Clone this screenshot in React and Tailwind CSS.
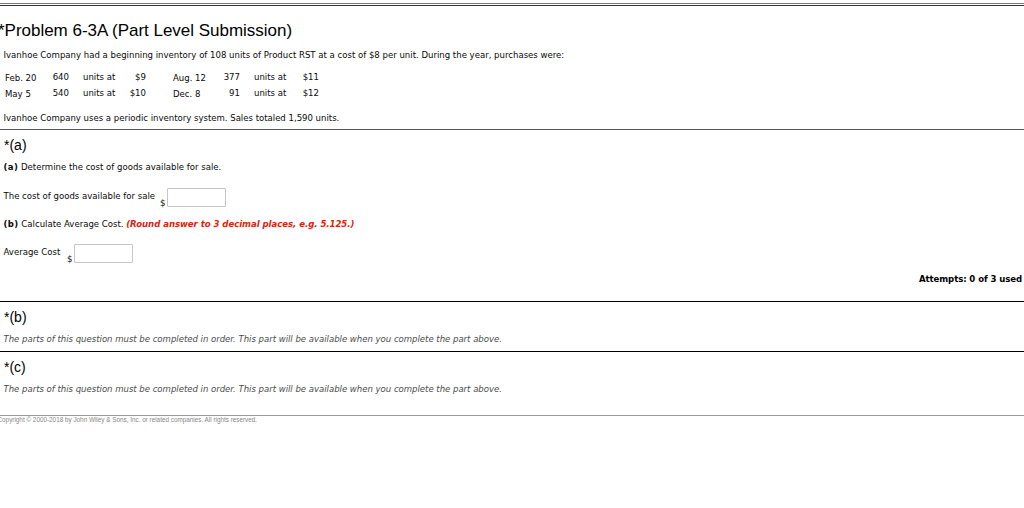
const purchases = [
  ['Feb. 20', '640', '$9', 'Aug. 12', '377', '$11'],
  ['May 5', '540', '$10', 'Dec. 8', '91', '$12'],
];

function PurchaseRow({ row }) {
  return (
    <div className="flex h-4">
      <span className="w-[43px] pt-px">{row[0]}</span>
      <span className="w-[21px] text-right">{row[1]}</span>
      <span className="ml-[14px] w-[43px]">units at</span>
      <span className="w-5 text-right">{row[2]}</span>
      <span className="ml-[27px] w-[43px] pt-px">{row[3]}</span>
      <span className="w-6 text-right">{row[4]}</span>
      <span className="ml-[14px] w-[43px]">units at</span>
      <span className="w-[22px] text-right">{row[5]}</span>
    </div>
  );
}

function AnswerRow({ label, labelClass }) {
  return (
    <label className="flex h-5 pl-[3px]">
      <span className={labelClass}>{label}</span>
      <span className="w-[7px] pt-[7px]">$</span>
      <input type="text" className="h-[19px] w-[59px] rounded-[1px] border border-[#c6c6c6] bg-white px-1 outline-none" />
    </label>
  );
}

function LockedPart({ name }) {
  return (
    <section className="h-[50px] border-t border-black">
      <h2 className="mt-[7px] h-4 pl-1 font-['Liberation_Sans',sans-serif] text-[14px] leading-4 text-black">{name}</h2>
      <p className="mt-[6px] pl-[3.5px] tracking-[-0.02px] italic text-[#4d4d4d]">
        The parts of this question must be completed in order. This part will be available when you complete the part above.
      </p>
    </section>
  );
}

export default function App() {
  return (
    <main className="h-[508px] w-full overflow-hidden bg-white pt-[3px] font-['DejaVu_Sans',Verdana,sans-serif] text-[8.55px] leading-4 whitespace-nowrap text-[#0a0a0a]">
      <div className="h-[3px] border-t border-b border-t-[#777] border-b-[#333]" />
      <h1 className="-ml-[2px] mt-[15px] h-5 font-['Liberation_Sans',sans-serif] text-[17px] leading-5 tracking-[-0.02px] text-black">
        *Problem 6-3A (Part Level Submission)
      </h1>
      <p className="mt-[6px] pl-[3.5px]">
        Ivanhoe Company had a beginning inventory of 108 units of Product RST at a cost of $8 per unit. During the year, purchases were:
      </p>
      <div className="mt-[6px] pl-[5px]">
        {purchases.map((row) => (
          <PurchaseRow key={row[0]} row={row} />
        ))}
      </div>
      <p className="mt-[9px] pl-[3.5px] tracking-[-0.01px]">Ivanhoe Company uses a periodic inventory system. Sales totaled 1,590 units.</p>
      <section className="mt-[3px] h-[172px] border-t border-[#555]">
        <h2 className="mt-[7px] h-4 pl-1 font-['Liberation_Sans',sans-serif] text-[14px] leading-4 text-black">*(a)</h2>
        <p className="mt-[6px] pl-[3.5px]">
          <b className="tracking-[0.4px]">(a)</b> Determine the cost of goods available for sale.
        </p>
        <div className="mt-[13px]">
          <AnswerRow label="The cost of goods available for sale" labelClass="w-[157px] pl-[0.5px]" />
        </div>
        <p className="mt-[8px] pl-[3.5px]">
          <b className="tracking-[0.4px]">(b)</b> Calculate Average Cost.{' '}
          <b className="italic tracking-[-0.04px] text-[#d9230f]">(Round answer to 3 decimal places, e.g. 5.125.)</b>
        </p>
        <div className="mt-[12px]">
          <AnswerRow label="Average Cost" labelClass="w-16 pl-[0.5px]" />
        </div>
        <p className="mt-[7px] pr-[2px] text-right font-bold tracking-[-0.08px] text-black">Attempts: 0 of 3 used</p>
      </section>
      <LockedPart name="*(b)" />
      <LockedPart name="*(c)" />
      <footer className="mt-[14px] border-t border-[#999] font-['Liberation_Sans',sans-serif] text-[6.35px] leading-[8px] text-[#888]">
        <span className="-ml-[2.5px]">Copyright © 2000-2018 by John Wiley &amp; Sons, Inc. or related companies. All rights reserved.</span>
      </footer>
    </main>
  );
}
